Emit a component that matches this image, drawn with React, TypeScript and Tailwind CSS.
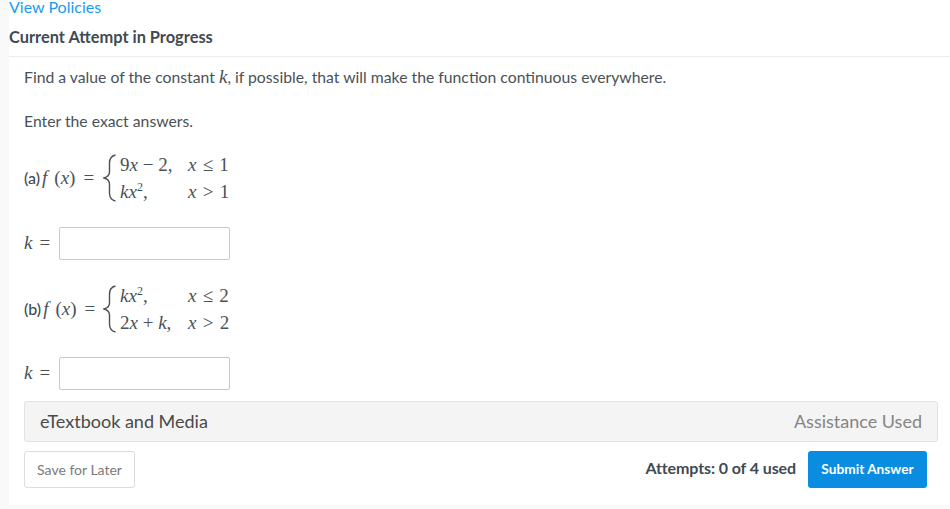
const serif = "font-['Liberation_Serif',serif]"

function Brace() {
  return (
    <svg width="13" height="48" viewBox="0 0 13 48" className="shrink-0" fill="none" stroke="#4a5157" strokeWidth="1.4">
      <path d="M12.5 1C8 2 6.5 5 6.5 9V18C6.5 21 4.5 23 1 24C4.5 25 6.5 27 6.5 30V39C6.5 43 8 46 12.5 47" />
    </svg>
  )
}

function Lhs({ part }: { part: string }) {
  return (
    <div className="flex w-[78px] items-center">
      <span className="text-[16px] font-medium text-[#414a52]">({part})</span>
      <span className={`${serif} ml-[2px] flex text-[19px] text-[#4a5157]`}>
        <i>f</i>
        <span className="ml-[7px]">
          (<i>x</i>)
        </span>
        <span className="ml-[8px]">=</span>
      </span>
    </div>
  )
}

function Piecewise({ part, rows }: { part: string; rows: [React.ReactNode, React.ReactNode][] }) {
  return (
    <div className="flex h-[50px] items-center pl-[24px]">
      <Lhs part={part} />
      <div className="ml-px">
        <Brace />
      </div>
      <div className={`${serif} ml-[4px] grid grid-cols-[68px_auto] text-[19px] leading-[27px] text-[#4a5157]`}>
        {rows.map((r, i) => (
          <div key={i} className="contents">
            <span className="whitespace-pre">{r[0]}</span>
            <span className="whitespace-pre [word-spacing:1.5px]">{r[1]}</span>
          </div>
        ))}
      </div>
    </div>
  )
}

function KInput() {
  return (
    <div className="flex items-center pl-[24px]">
      <span className={`${serif} flex w-[35px] text-[19px] text-[#4a5157]`}>
        <i>k</i>
        <span className="ml-[7px]">=</span>
      </span>
      <div className="h-[33px] w-[171px] rounded-[2px] border border-[#c9c9c9] bg-white" />
    </div>
  )
}

const Sq = () => <sup className="-top-[7px] text-[12px] leading-none">2</sup>

export default function App() {
  return (
    <div className="h-[509px] w-[950px] overflow-hidden bg-[#f9f9f9] font-['Lato',sans-serif]">
      <div className="ml-[9px] h-[505px] bg-white">
        <a className="block h-[15px] text-[16px] leading-[14px] text-[#1a9bf0]">View Policies</a>
        <h2 className="mt-[13px] h-[28px] text-[16.4px] font-bold leading-[18px] text-[#414a52]">Current Attempt in Progress</h2>
        <div className="h-px bg-[#ececec]" />
        <div className="-ml-[9px]">
          <p className="mt-[10px] pl-[24px] text-[15.75px] leading-[20px] text-[#4a5157]">
            Find a value of the constant <i className={`${serif} text-[19px]`}>k</i>, if possible, that will make the function continuous everywhere.
          </p>
          <p className="mt-[24px] pl-[24px] text-[15.75px] leading-[20px] text-[#4a5157]">Enter the exact answers.</p>
          <div className="mt-[22px]">
            <Piecewise
              part="a"
              rows={[
                [<>9<i>x</i> − 2,</>, <><i>x</i> ≤ 1</>],
                [<><i>kx</i><Sq />,</>, <><i>x</i> &gt; 1</>],
              ]}
            />
          </div>
          <div className="mt-[24px]">
            <KInput />
          </div>
          <div className="mt-[24px]">
            <Piecewise
              part="b"
              rows={[
                [<><i>kx</i><Sq />,</>, <><i>x</i> ≤ 2</>],
                [<>2<i>x</i> + <i>k</i>,</>, <><i>x</i> &gt; 2</>],
              ]}
            />
          </div>
          <div className="mt-[23px]">
            <KInput />
          </div>
          <div className="ml-[24px] mt-[11px] flex h-[41px] w-[914px] items-center justify-between rounded-[3px] border border-[#e2e2e2] bg-[#f4f4f4] px-[15px] text-[18px]">
            <span className="text-[#4a4a4a]">eTextbook and Media</span>
            <span className="text-[#858585]">Assistance Used</span>
          </div>
          <div className="ml-[24px] mt-[9px] flex w-[903px] items-center justify-between">
            <button className="h-[37px] w-[111px] rounded-[3px] border border-[#dcdcdc] bg-white text-[14px] text-[#7a7a7a]">Save for Later</button>
            <div className="flex items-center">
              <span className="mr-[12px] -mt-[3px] text-[16px] font-bold tracking-[-0.1px] text-[#414a52]">Attempts: 0 of 4 used</span>
              <button className="h-[37px] w-[119px] rounded-[3px] bg-[#0a8ce0] text-[13.7px] font-bold text-white">Submit Answer</button>
            </div>
          </div>
        </div>
      </div>
    </div>
  )
}
